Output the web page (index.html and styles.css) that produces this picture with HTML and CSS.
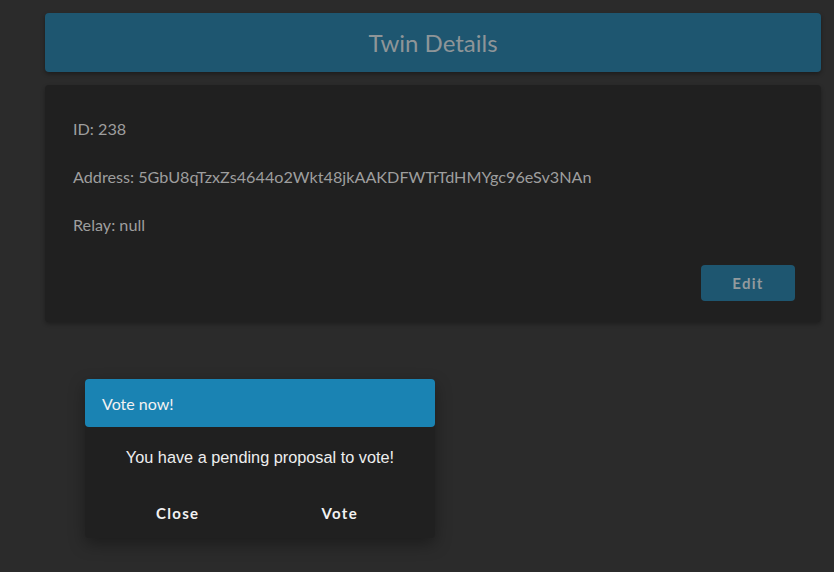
FILE: index.html
```html
<!DOCTYPE html>
<html>
<head>
<meta charset="utf-8">
<link rel="stylesheet" href="styles.css">
</head>
<body>
<main class="page">
  <header class="title-card"><h1>Twin Details</h1></header>
  <section class="details-card">
    <p class="row">ID: 238</p>
    <p class="row">Address: 5GbU8qTzxZs4644o2Wkt48jkAAKDFWTrTdHMYgc96eSv3NAn</p>
    <p class="row">Relay: null</p>
    <div class="actions"><button class="btn-edit">Edit</button></div>
  </section>
</main>
<div class="dialog">
  <div class="dialog-head">Vote now!</div>
  <div class="dialog-body">You have a pending proposal to vote!</div>
  <div class="dialog-actions">
    <button class="dlg-btn">Close</button>
    <button class="dlg-btn">Vote</button>
  </div>
</div>
</body>
</html>
```
FILE: styles.css
```css
html, body { margin: 0; padding: 0; }
body {
  background: #2b2b2b;
  width: 834px;
  height: 572px;
  overflow: hidden;
  font-family: Lato, "Open Sans", sans-serif;
  position: relative;
}
.page {
  padding: 13px 13px 0 45px;
  display: flex;
  flex-direction: column;
  gap: 13px;
}
.title-card {
  background: #1e5670;
  border-radius: 4px;
  height: 59px;
  display: flex;
  align-items: center;
  justify-content: center;
  box-shadow: 0 2px 4px rgba(0,0,0,0.35);
}
.title-card h1 {
  margin: 0;
  font-weight: 400;
  font-size: 24px;
  color: #8e9598;
}
.details-card {
  background: #202020;
  border-radius: 4px;
  padding: 21px 26px 21px 28px;
  height: 195px;
  box-shadow: 0 2px 4px rgba(0,0,0,0.3);
  display: flex;
  flex-direction: column;
}
.row {
  margin: 0;
  height: 48px;
  line-height: 46px;
  font-size: 16.2px;
  color: #9e9e9e;
}
.actions {
  display: flex;
  justify-content: flex-end;
  margin-top: 15px;
}
.btn-edit {
  width: 94px;
  height: 36px;
  border: none;
  border-radius: 4px;
  background: #1e5670;
  color: #939a9d;
  font-family: Lato, sans-serif;
  font-weight: 700;
  font-size: 15px;
  letter-spacing: 1.3px;
}
.dialog {
  position: absolute;
  left: 85px;
  top: 379px;
  width: 350px;
  height: 159px;
  background: #202020;
  border-radius: 4px;
  box-shadow: 0 6px 16px rgba(0,0,0,0.35);
  display: flex;
  flex-direction: column;
}
.dialog-head {
  background: #1a83b3;
  border-radius: 4px;
  height: 48px;
  line-height: 49px;
  padding-left: 17px;
  color: #f2f2f2;
  font-size: 16px;
}
.dialog-body {
  text-align: center;
  font-family: "Liberation Sans", Arial, sans-serif;
  font-size: 16.3px;
  color: #eeeeee;
  padding-top: 21px;
  height: 40px;
}
.dialog-actions {
  display: flex;
  justify-content: space-around;
  padding: 8px 16px 0 10px;
}
.dlg-btn {
  background: none;
  border: none;
  color: #f2f2f2;
  font-family: Lato, sans-serif;
  font-weight: 700;
  font-size: 15px;
  letter-spacing: 1.3px;
  padding: 8px 16px;
}
```
